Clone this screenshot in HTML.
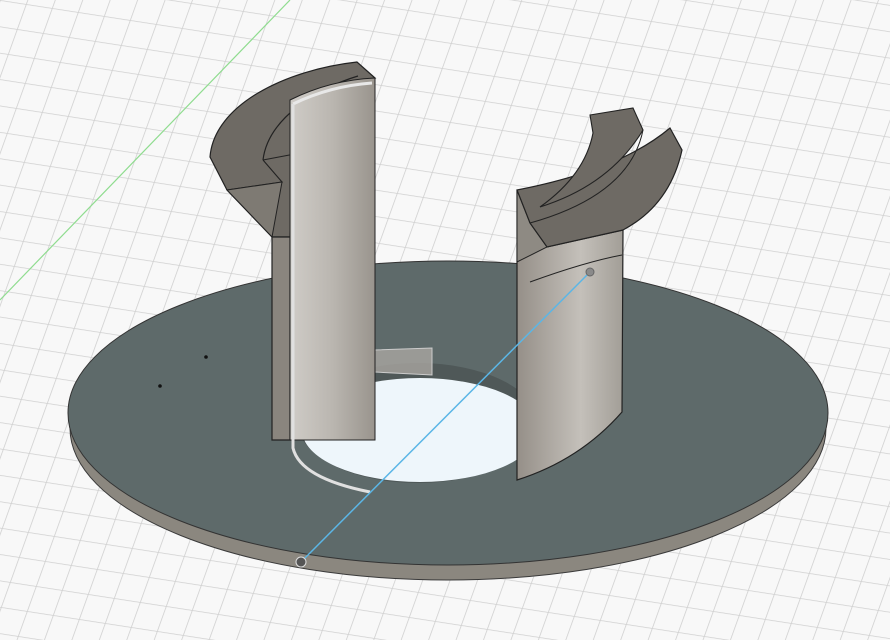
<!DOCTYPE html>
<html><head><meta charset="utf-8"><style>html,body{margin:0;padding:0;background:#f7f7f7}svg{display:block}</style></head><body>
<svg width="890" height="640" viewBox="0 0 890 640" xmlns="http://www.w3.org/2000/svg">
<defs>
<pattern id="g" width="1" height="1" patternUnits="userSpaceOnUse" patternTransform="matrix(26 4 -9 25 0 0)">
<rect width="1" height="1" fill="#f8f8f8"/>
<path d="M0 0H1M0 0V1" stroke="#cfcfcf" stroke-width="0.06" fill="none"/>
</pattern>
<linearGradient id="cyl" x1="0" x2="1"><stop offset="0" stop-color="#cfccc7"/><stop offset="0.5" stop-color="#bab6b0"/><stop offset="1" stop-color="#99948d"/></linearGradient>
<linearGradient id="cyl2" x1="0" x2="1"><stop offset="0" stop-color="#958f88"/><stop offset="0.6" stop-color="#c4c0ba"/><stop offset="1" stop-color="#a29e97"/></linearGradient>
</defs>
<rect width="890" height="640" fill="url(#g)"/>
<line x1="290" y1="0" x2="0" y2="300" stroke="#8fdc8f" stroke-width="1.2"/>
<!-- disk -->
<ellipse cx="448" cy="428" rx="378" ry="152" fill="#8b877f" stroke="#3a3a3a" stroke-width="1"/>
<ellipse cx="448" cy="413" rx="380" ry="152" fill="#5e6a6a" stroke="#333" stroke-width="1"/>
<!-- hole -->
<ellipse cx="418" cy="423" rx="120" ry="60" fill="#4f5858"/>
<ellipse cx="420" cy="430" rx="118" ry="52" fill="#eef6fb"/>
<!-- left cap -->
<path d="M210 157 C214 105 285 70 357 62 L375 78 C330 84 300 100 292 115 L290 237 L272 237 L227 190 Z" fill="#6e6a64" stroke="#222" stroke-width="1.2"/>
<path d="M263 160 C268 118 318 88 358 76" stroke="#222" stroke-width="1.2" fill="none"/>
<path d="M227 190 L282 182 L263 160 M263 160 L300 153" stroke="#222" stroke-width="1.1" fill="none"/>
<path d="M227 190 L282 182 L272 237 Z" fill="#7e7a73" stroke="#222" stroke-width="1"/>
<!-- left piece -->
<path d="M272 237 L290 237 L290 440 L272 440 Z" fill="#8a857e" stroke="#222" stroke-width="1.2"/>
<path d="M375 350 L432 348 L432 375 L375 372 Z" fill="#a9a6a1" fill-opacity="0.8" stroke="#ccc" stroke-width="1"/>
<path d="M290 100 Q330 80 375 78 L375 440 L290 440 Z" fill="url(#cyl)" stroke="#222" stroke-width="1"/>
<path d="M293 104 Q330 86 372 83" stroke="#e8e8e8" stroke-width="3" fill="none"/>
<path d="M293 104 L293 448 Q300 478 370 492" stroke="#e0e0e0" stroke-width="3" fill="none"/>
<!-- right piece -->
<path d="M517 190 L547 247 L623 230 L622 412 Q580 460 517 480 Z" fill="url(#cyl2)" stroke="#222" stroke-width="1.2"/>
<path d="M517 190 L530 223 L547 247 L517 262 Z" fill="#8e8a83" stroke="#222"/>
<path d="M530 282 Q585 262 622 255" stroke="#222" fill="none"/>
<path d="M517 190 Q620 170 670 128 L682 150 Q670 205 623 230 L547 247 L530 223 Z" fill="#6e6a64" stroke="#222" stroke-width="1.2"/>
<path d="M530 223 Q630 195 643 130" stroke="#222" fill="none" stroke-width="1"/>
<path d="M590 115 L633 108 L643 130 Q610 185 540 207 Q585 175 593 133 Z" fill="#6e6a64" stroke="#222" stroke-width="1.1"/>
<!-- dots -->
<circle cx="206" cy="357" r="1.8" fill="#111"/><circle cx="160" cy="386" r="1.8" fill="#111"/>
<!-- blue line -->
<line x1="301" y1="562" x2="590" y2="272" stroke="#5bb6e6" stroke-width="1.5"/>
<circle cx="301" cy="562" r="5" fill="#555" stroke="#ddd" stroke-width="1"/>
<circle cx="590" cy="272" r="4" fill="#8a8a8a" stroke="#666"/>
</svg>
</body></html>
